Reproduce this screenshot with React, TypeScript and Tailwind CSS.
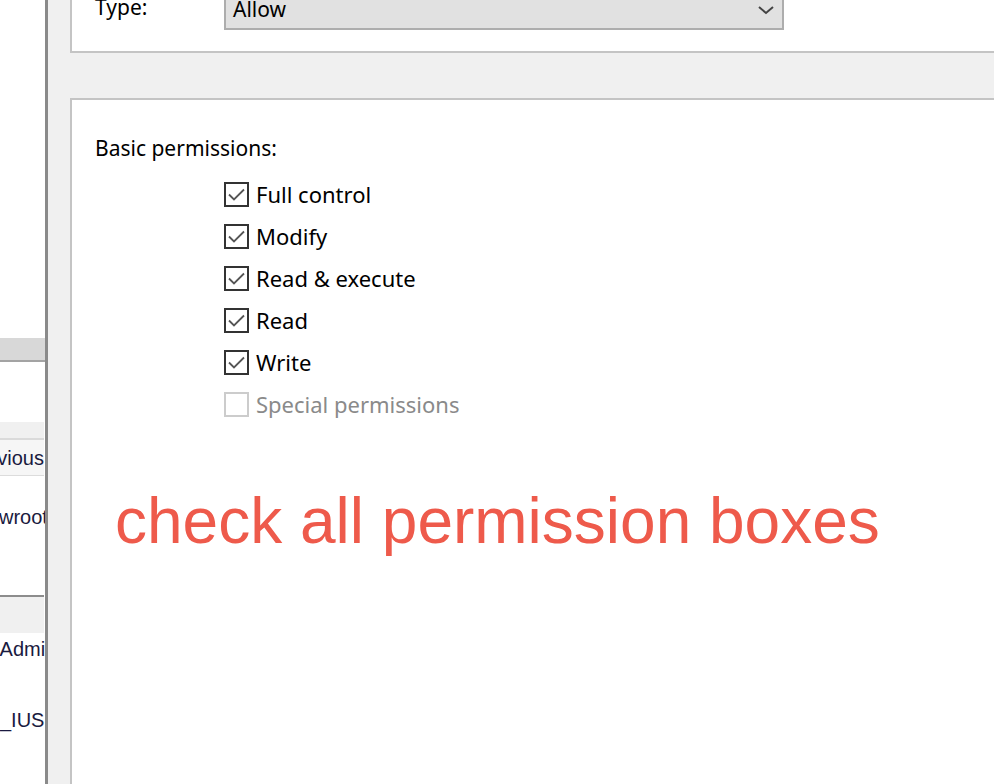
// App.tsx – Windows "Permission Entry" dialog crop with an annotation.

const uiFont = { fontFamily: '"Noto Sans", "Open Sans", sans-serif' };
const listFont = { fontFamily: '"Liberation Sans", Arial, sans-serif' };

interface Permission {
  label: string;
  checked: boolean;
  disabled?: boolean;
}

const permissions: Permission[] = [
  { label: "Full control", checked: true },
  { label: "Modify", checked: true },
  { label: "Read & execute", checked: true },
  { label: "Read", checked: true },
  { label: "Write", checked: true },
  { label: "Special permissions", checked: false, disabled: true },
];

function CheckBox({ checked, disabled }: { checked: boolean; disabled?: boolean }) {
  return (
    <span
      className={
        "flex h-[25px] w-[25px] shrink-0 items-center justify-center border-2 bg-white " +
        (disabled ? "border-[#cccccc]" : "border-[#333333]")
      }
    >
      {checked && (
        <svg width="21" height="21" viewBox="0 0 21 21" fill="none">
          <polyline
            points="3,10.5 8,15.5 18,5.5"
            stroke="#555555"
            strokeWidth="1.8"
            strokeLinejoin="miter"
          />
        </svg>
      )}
    </span>
  );
}

function LeftPane() {
  return (
    <div className="flex w-[48px] shrink-0 flex-col overflow-hidden border-r-[3px] border-[#8a8a8a] bg-white" style={listFont}>
      <div className="h-[338px] shrink-0" />
      <div className="h-[24px] shrink-0 border-b-2 border-[#a3a3a3] bg-[#d8d8d8]" />
      <div className="h-[60px] shrink-0" />
      <div className="mr-[1px] h-[18px] shrink-0 border-b-2 border-[#dadada] bg-[#f0f0f0]" />
      <div className="mr-[1px] flex h-[36px] shrink-0 items-center justify-end border-b border-[#dcdcdc] bg-[#f6f6f6] text-[20px] text-[#1a1a40]">
        <span className="whitespace-nowrap">vious</span>
      </div>
      <div className="h-[119px] shrink-0 pt-[29px] text-[20px] leading-[24px] text-[#1a1a40]">
        <span className="-ml-[1px] whitespace-nowrap">wroot\</span>
      </div>
      <div className="mr-[1px] h-[38px] shrink-0 border-t-2 border-[#8c8c8c] bg-[#f0f0f0]" />
      <div className="flex h-[32px] shrink-0 items-center text-[20px] text-[#1a1a40]">
        <span className="-ml-[6px] whitespace-nowrap">\Administrators</span>
      </div>
      <div className="h-[76px] shrink-0 pt-[43px] text-[20px] leading-[24px] text-[#1a1a40]">
        <span className="whitespace-nowrap">_IUSRS</span>
      </div>
      <div className="flex-1" />
    </div>
  );
}

function TypeBox() {
  return (
    <div className="h-[53px] shrink-0 overflow-hidden border-b-2 border-l-2 border-[#c4c4c4] bg-white">
      <div className="flex items-start pl-[23px]">
        <span className="-mt-[7px] w-[129px] text-[21px] leading-[28px] text-black">Type:</span>
        <div className="-mt-[12px] flex h-[42px] w-[560px] items-end justify-between border-2 border-[#adadad] bg-[#e1e1e1] pb-[5px] pl-[7px] pr-[6px]">
          <span className="text-[21px] leading-[28px] text-black">Allow</span>
          <svg width="20" height="20" viewBox="0 0 20 20" fill="none" className="mb-[2px]">
            <polyline points="3,6 10,12 17,6" stroke="#444444" strokeWidth="2" />
          </svg>
        </div>
      </div>
    </div>
  );
}

function PermissionsBox() {
  return (
    <div className="flex-1 border-l-2 border-t-2 border-[#c4c4c4] bg-white pl-[23px] pt-[34px]">
      <p className="text-[21px] leading-[28px] text-black">Basic permissions:</p>
      <div className="ml-[129px] mt-[11px] flex flex-col">
        {permissions.map((p) => (
          <label key={p.label} className="flex h-[42px] items-center gap-[7px]">
            <CheckBox checked={p.checked} disabled={p.disabled} />
            <span className={"text-[22px] leading-[28px] " + (p.disabled ? "text-[#8a8a8a]" : "text-black")}>
              {p.label}
            </span>
          </label>
        ))}
      </div>
      <p
        className="ml-[20px] mt-[64px] whitespace-nowrap text-[64px] leading-none text-[#ee5a4b]"
        style={listFont}
      >
        check all permission boxes
      </p>
    </div>
  );
}

export default function App() {
  return (
    <div className="flex h-[784px] w-[994px] overflow-hidden bg-white" style={uiFont}>
      <LeftPane />
      <div className="flex flex-1 flex-col bg-[#f0f0f0] pl-[22px]">
        <TypeBox />
        <div className="h-[45px] shrink-0" />
        <PermissionsBox />
      </div>
    </div>
  );
}
